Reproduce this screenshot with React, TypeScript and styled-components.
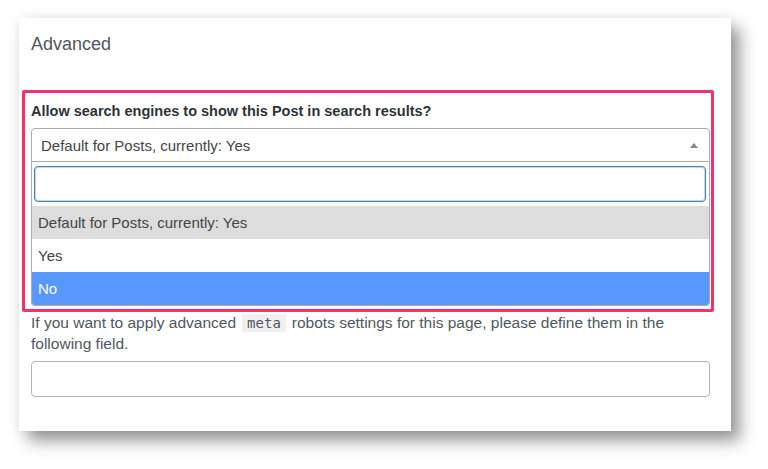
import React from 'react';
import styled, { createGlobalStyle } from 'styled-components';

const Global = createGlobalStyle`
    body {
        margin: 0;
        background: #fff;
        font-family: "Liberation Sans", Arial, sans-serif;
    }
`;

const Page = styled.div`
    padding: 18px 0 0 19px;
    height: 469px;
    box-sizing: border-box;
`;

const Card = styled.div`
    width: 712px;
    box-sizing: border-box;
    background: #fff;
    padding: 14px 21px 34px 12px;
    box-shadow: 9px 10px 15px rgba(0, 0, 0, 0.4), 0 0 10px rgba(0, 0, 0, 0.08);
`;

const Title = styled.h2`
    margin: 0;
    font-size: 18px;
    line-height: 24px;
    font-weight: 400;
    color: #50575e;
`;

const Highlight = styled.div`
    margin: 34px -4px 0 -9px;
    border: 3px solid #f5306c;
    border-radius: 2px;
    padding: 8px 1px 3px 6px;
`;

const Label = styled.div`
    font-size: 14.5px;
    line-height: 20px;
    font-weight: 700;
    color: #2c3338;
    margin-bottom: 7px;
`;

const Select = styled.div`
    height: 34px;
    box-sizing: border-box;
    border: 1px solid #aaa;
    border-radius: 4px 4px 0 0;
    display: flex;
    align-items: center;
    justify-content: space-between;
    padding: 0 11px 0 9px;
    font-size: 15px;
    color: #444;
`;

const Arrow = styled.span`
    width: 0;
    height: 0;
    border-style: solid;
    border-width: 0 4px 5px 4px;
    border-color: transparent transparent #888 transparent;
`;

const Dropdown = styled.div`
    border: 1px solid #aaa;
    border-top: none;
    border-radius: 0 0 4px 4px;
    overflow: hidden;
`;

const SearchWrap = styled.div`
    padding: 4px 3px 4px 2px;
`;

const Search = styled.input`
    display: block;
    width: 100%;
    height: 36px;
    box-sizing: border-box;
    border: 1px solid #3089c4;
    border-radius: 4px;
    box-shadow: inset 0 0 0 1px #d4d4d4;
    outline: none;
`;

const Option = styled.div<{ $state?: 'hover' | 'active' }>`
    height: 33px;
    display: flex;
    align-items: center;
    padding-left: 6px;
    font-size: 15px;
    color: ${(p) => (p.$state === 'active' ? '#fff' : '#444')};
    background: ${(p) =>
        p.$state === 'active' ? '#5897fb' : p.$state === 'hover' ? '#ddd' : '#fff'};
`;

const Help = styled.p`
    margin: 0;
    font-size: 15.5px;
    line-height: 21px;
    color: #50575e;
`;

const Code = styled.code`
    display: inline-block;
    font-family: "DejaVu Sans Mono", monospace;
    font-size: 14px;
    line-height: 18px;
    background: #f0f0f1;
    padding: 0 5px;
    margin: 0 6px;
`;

const TextInput = styled.input`
    display: block;
    width: 100%;
    height: 36px;
    box-sizing: border-box;
    margin-top: 7px;
    border: 1px solid #b4b4b4;
    border-radius: 4px;
    outline: none;
`;

export default function App() {
    return (
        <Page>
            <Global />
            <Card>
                <Title>Advanced</Title>
                <Highlight>
                    <Label>Allow search engines to show this Post in search results?</Label>
                    <Select>
                        <span>Default for Posts, currently: Yes</span>
                        <Arrow />
                    </Select>
                    <Dropdown>
                        <SearchWrap>
                            <Search />
                        </SearchWrap>
                        <Option $state="hover">Default for Posts, currently: Yes</Option>
                        <Option>Yes</Option>
                        <Option $state="active">No</Option>
                    </Dropdown>
                </Highlight>
                <Help>
                    <span>If you want to apply advanced</span>
                    <Code>meta</Code>
                    <span>robots settings for this page, please define them in the</span>
                    <br />
                    <span>following field.</span>
                </Help>
                <TextInput />
            </Card>
        </Page>
    );
}
